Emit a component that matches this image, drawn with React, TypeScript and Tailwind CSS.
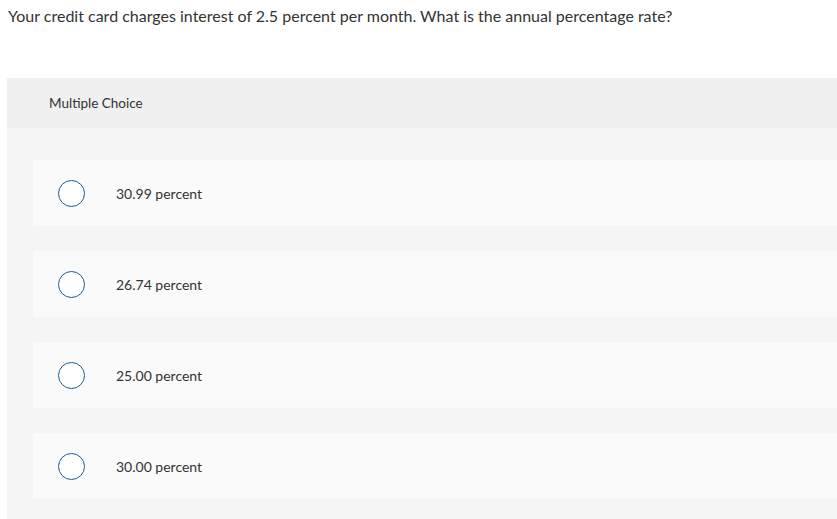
import React from 'react';

const choices = ['30.99 percent', '26.74 percent', '25.00 percent', '30.00 percent'];

function Radio() {
  return <span className="block w-[27px] h-[27px] rounded-full border-[1.5px] border-[#1b5a96] bg-white shrink-0" />;
}

export default function App() {
  return (
    <div className="w-[837px] h-[519px] overflow-hidden bg-white text-[#333] font-['Lato',sans-serif]">
      <p className="pl-2 pt-[6px] text-[16px] leading-[20px]">
        Your credit card charges interest of 2.5 percent per month. What is the annual percentage rate?
      </p>
      <div className="ml-[7px] mt-[52px] bg-[#f5f5f5] pb-5">
        <div className="h-[50px] bg-[#f0f0f0] flex items-center pl-[42px] text-[13.5px]">Multiple Choice</div>
        <div className="pl-[26px] pt-8 flex flex-col gap-[25px]">
          {choices.map((c) => (
            <div key={c} className="h-[66px] bg-[#fafafa] flex items-center pl-[25px]">
              <Radio />
              <span className="ml-[31px] text-[14px]">{c}</span>
            </div>
          ))}
        </div>
      </div>
    </div>
  );
}
